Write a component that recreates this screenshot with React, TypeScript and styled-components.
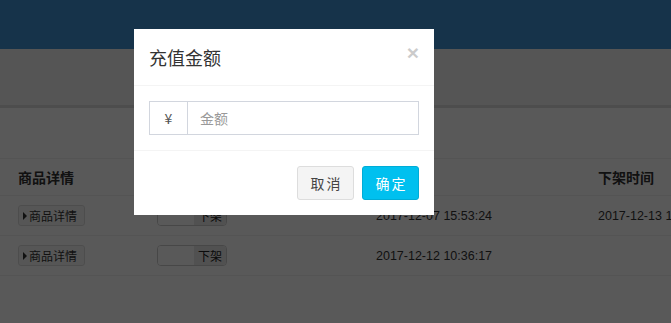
import React from "react";
import styled, { createGlobalStyle } from "styled-components";

const GlobalStyle = createGlobalStyle`
  html, body { margin: 0; padding: 0; background: #ffffff; overflow: hidden; }
  body {
    font-family: "Liberation Sans", "Noto Sans CJK SC", sans-serif;
    color: #333333;
    font-size: 14px;
  }
`;

const Page = styled.div`
  width: 671px;
  height: 323px;
  position: relative;
  overflow: hidden;
  background: #ffffff;
`;

const NavBar = styled.div`
  height: 49px;
  background: #3f92d3;
`;

const ContentHeader = styled.div`
  height: 56px;
  background: #f3f3f3;
  border-bottom: 3px solid #dcdcdc;
`;

const Table = styled.div`
  margin-top: 50px;
  display: flex;
  flex-direction: column;
`;

const Row = styled.div<{ $head?: boolean }>`
  display: grid;
  grid-template-columns: 139px 219px 222px 1fr;
  padding-left: 18px;
  height: ${(p) => (p.$head ? 36 : 39)}px;
  align-items: center;
  border-top: 1px solid #f0f0f0;
  font-weight: ${(p) => (p.$head ? 700 : 400)};
  font-family: "Noto Sans CJK SC", "Liberation Sans", sans-serif;
`;

const HeadCell = styled.div`
  font-size: 14px;
  color: #333;
  white-space: nowrap;
`;

const DateCell = styled.div`
  font-family: "Liberation Sans", "Noto Sans CJK SC", sans-serif;
  font-size: 12.5px;
  color: #333;
  white-space: nowrap;
`;

const DetailButton = styled.div`
  display: inline-flex;
  align-items: center;
  gap: 2px;
  height: 19px;
  width: 61px;
  box-sizing: content-box;
  padding: 0 0 0 4px;
  border: 1px solid #dddddd;
  border-radius: 3px;
  background: #f7f7f7;
  font-size: 12px;
  color: #333;
  justify-self: start;
`;

const Caret = styled.span`
  width: 0;
  height: 0;
  border-top: 4px solid transparent;
  border-bottom: 4px solid transparent;
  border-left: 4px solid #333;
`;

const Toggle = styled.div`
  display: grid;
  grid-template-columns: 36px 1fr;
  width: 68px;
  height: 19px;
  border: 1px solid #cccccc;
  border-radius: 4px;
  overflow: hidden;
  justify-self: start;
`;

const ToggleOn = styled.div`
  background: #ffffff;
`;

const ToggleOff = styled.div`
  background: #e8e8e8;
  font-size: 12px;
  color: #222;
  display: flex;
  align-items: center;
  justify-content: center;
`;

const Backdrop = styled.div`
  position: absolute;
  inset: 0;
  background: rgba(0, 0, 0, 0.65);
`;

const Modal = styled.div`
  position: absolute;
  left: 134px;
  top: 29px;
  width: 300px;
  background: #ffffff;
  font-family: "Noto Sans CJK SC", "Liberation Sans", sans-serif;
`;

const ModalHeader = styled.div`
  display: flex;
  justify-content: space-between;
  align-items: flex-start;
  padding: 15px;
  height: 26px;
  border-bottom: 1px solid #f4f4f4;
`;

const Title = styled.div`
  font-size: 18px;
  line-height: 26px;
  color: #333;
`;

const Close = styled.div`
  font-family: "Liberation Sans", sans-serif;
  font-size: 21px;
  font-weight: 700;
  line-height: 18px;
  color: #000;
  opacity: 0.2;
  margin-right: 0px;
  margin-top: 0px;
`;

const ModalBody = styled.div`
  padding: 15px;
  border-bottom: 1px solid #f4f4f4;
`;

const InputGroup = styled.div`
  display: grid;
  grid-template-columns: 39px 1fr;
  height: 34px;
`;

const Addon = styled.div`
  border: 1px solid #d2d6de;
  display: flex;
  align-items: center;
  justify-content: center;
  font-size: 14px;
  color: #555;
`;

const AmountInput = styled.input`
  border: 1px solid #d2d6de;
  border-left: none;
  padding: 0 12px;
  font-family: "Noto Sans CJK SC", "Liberation Sans", sans-serif;
  font-size: 14px;
  color: #555;
  outline: none;
  min-width: 0;
  &::placeholder { color: #999; }
`;

const ModalFooter = styled.div`
  display: flex;
  justify-content: flex-end;
  gap: 8px;
  padding: 15px;
`;

const Button = styled.button<{ $primary?: boolean }>`
  width: 57px;
  height: 34px;
  border-radius: 3px;
  border: 1px solid ${(p) => (p.$primary ? "#00acd6" : "#dddddd")};
  background: ${(p) => (p.$primary ? "#00c0ef" : "#f4f4f4")};
  color: ${(p) => (p.$primary ? "#ffffff" : "#444444")};
  font-family: "Noto Sans CJK SC", "Liberation Sans", sans-serif;
  font-size: 14px;
  letter-spacing: 2px;
  padding: 0 0 0 2px;
  cursor: pointer;
`;

const rows = [
  { up: "2017-12-07 15:53:24", down: "2017-12-13 16:20:11" },
  { up: "2017-12-12 10:36:17", down: "" },
];

export default function App() {
  return (
    <Page>
      <GlobalStyle />
      <NavBar />
      <ContentHeader />
      <Table>
        <Row $head>
          <HeadCell>商品详情</HeadCell>
          <HeadCell>上架状态</HeadCell>
          <HeadCell>上架时间</HeadCell>
          <HeadCell>下架时间</HeadCell>
        </Row>
        {rows.map((r, i) => (
          <Row key={i}>
            <DetailButton>
              <Caret />
              商品详情
            </DetailButton>
            <Toggle>
              <ToggleOn />
              <ToggleOff>下架</ToggleOff>
            </Toggle>
            <DateCell>{r.up}</DateCell>
            <DateCell>{r.down}</DateCell>
          </Row>
        ))}
        <Row />
      </Table>
      <Backdrop />
      <Modal>
        <ModalHeader>
          <Title>充值金额</Title>
          <Close>×</Close>
        </ModalHeader>
        <ModalBody>
          <InputGroup>
            <Addon>¥</Addon>
            <AmountInput placeholder="金额" />
          </InputGroup>
        </ModalBody>
        <ModalFooter>
          <Button>取消</Button>
          <Button $primary>确定</Button>
        </ModalFooter>
      </Modal>
    </Page>
  );
}
